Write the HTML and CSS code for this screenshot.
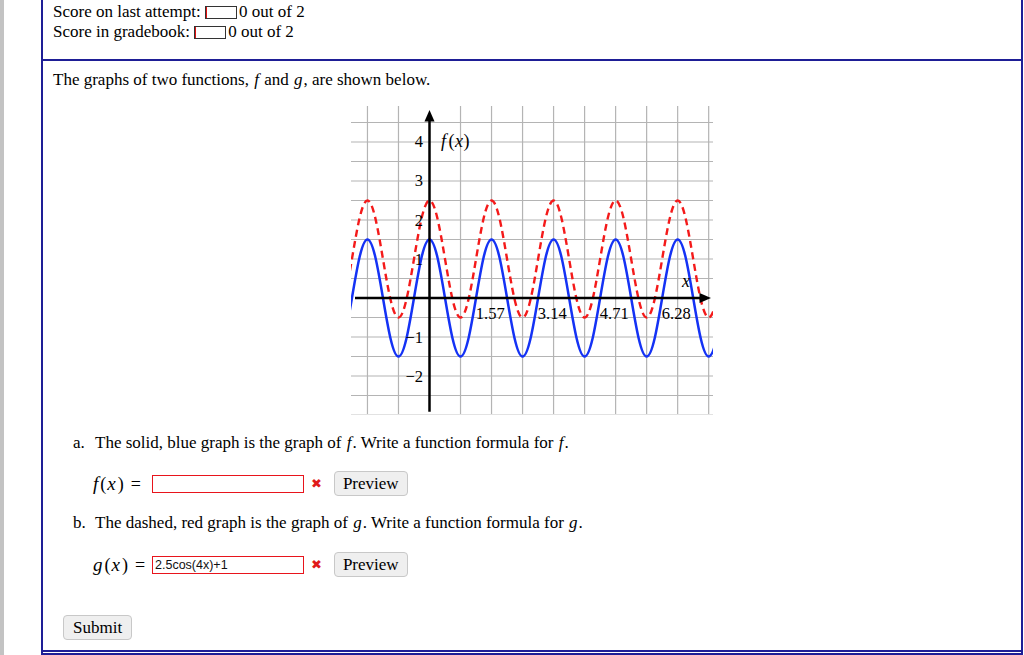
FILE: index.html
```html
<!DOCTYPE html>
<html>
<head>
<meta charset="utf-8">
<link rel="stylesheet" href="styles.css">
</head>
<body>
<div class="page">
  <div class="strip"></div>
  <div class="main">
    <div class="scores">
      <div class="score-line">Score on last attempt: <span class="bar"><span class="fill"></span></span><span class="val">0 out of 2</span></div>
      <div class="score-line">Score in gradebook: <span class="bar"><span class="fill"></span></span><span class="val">0 out of 2</span></div>
    </div>
    <div class="problem">
      <p class="intro">The graphs of two functions, <i class="mi">f</i> and <i class="mi">g</i>, are shown below.</p>
      <div class="graph-wrap">
        <svg class="graph" width="362" height="310" viewBox="0 0 362 310" xmlns="http://www.w3.org/2000/svg">
          <g class="grid" stroke="#b4b4b4" stroke-width="1.2">
            <line x1="16.46" y1="1" x2="16.46" y2="310"/>
            <line x1="47.48" y1="1" x2="47.48" y2="310"/>
            <line x1="109.52" y1="1" x2="109.52" y2="310"/>
            <line x1="140.54" y1="1" x2="140.54" y2="310"/>
            <line x1="171.56" y1="1" x2="171.56" y2="310"/>
            <line x1="202.58" y1="1" x2="202.58" y2="310"/>
            <line x1="233.6" y1="1" x2="233.6" y2="310"/>
            <line x1="264.62" y1="1" x2="264.62" y2="310"/>
            <line x1="295.64" y1="1" x2="295.64" y2="310"/>
            <line x1="326.66" y1="1" x2="326.66" y2="310"/>
            <line x1="357.68" y1="1" x2="357.68" y2="310"/>
            <line x1="0" y1="17.5" x2="362" y2="17.5"/>
            <line x1="0" y1="37" x2="362" y2="37"/>
            <line x1="0" y1="56.5" x2="362" y2="56.5"/>
            <line x1="0" y1="76" x2="362" y2="76"/>
            <line x1="0" y1="95.5" x2="362" y2="95.5"/>
            <line x1="0" y1="115" x2="362" y2="115"/>
            <line x1="0" y1="134.5" x2="362" y2="134.5"/>
            <line x1="0" y1="154" x2="362" y2="154"/>
            <line x1="0" y1="173.5" x2="362" y2="173.5"/>
            <line x1="0" y1="212.5" x2="362" y2="212.5"/>
            <line x1="0" y1="232" x2="362" y2="232"/>
            <line x1="0" y1="251.5" x2="362" y2="251.5"/>
            <line x1="0" y1="271" x2="362" y2="271"/>
            <line x1="0" y1="290.5" x2="362" y2="290.5"/>
            <line x1="0" y1="309.5" x2="362" y2="309.5" stroke="#e2e2e2"/>
          </g>
          <path class="red" fill="none" stroke="#f41a1a" stroke-width="2.4" stroke-dasharray="7,4.5"
            d="M-45.596,95.5
            c5.614,0 10.453,28.53 15.512,58.5 c5.059,29.97 9.898,58.5 15.512,58.5 c5.614,0 10.453,-28.53 15.512,-58.5 c5.059,-29.97 9.898,-58.5 15.512,-58.5
            c5.614,0 10.453,28.53 15.512,58.5 c5.059,29.97 9.898,58.5 15.512,58.5 c5.614,0 10.453,-28.53 15.512,-58.5 c5.059,-29.97 9.898,-58.5 15.512,-58.5
            c5.614,0 10.453,28.53 15.512,58.5 c5.059,29.97 9.898,58.5 15.512,58.5 c5.614,0 10.453,-28.53 15.512,-58.5 c5.059,-29.97 9.898,-58.5 15.512,-58.5
            c5.614,0 10.453,28.53 15.512,58.5 c5.059,29.97 9.898,58.5 15.512,58.5 c5.614,0 10.453,-28.53 15.512,-58.5 c5.059,-29.97 9.898,-58.5 15.512,-58.5
            c5.614,0 10.453,28.53 15.512,58.5 c5.059,29.97 9.898,58.5 15.512,58.5 c5.614,0 10.453,-28.53 15.512,-58.5 c5.059,-29.97 9.898,-58.5 15.512,-58.5
            c5.614,0 10.453,28.53 15.512,58.5 c5.059,29.97 9.898,58.5 15.512,58.5 c5.614,0 10.453,-28.53 15.512,-58.5 c5.059,-29.97 9.898,-58.5 15.512,-58.5
            c5.614,0 10.453,28.53 15.512,58.5 c5.059,29.97 9.898,58.5 15.512,58.5 c5.614,0 10.453,-28.53 15.512,-58.5 c5.059,-29.97 9.898,-58.5 15.512,-58.5"/>
          <path class="blue" fill="none" stroke="#1432f5" stroke-width="2.5"
            d="M-45.596,134.5
            c5.614,0 10.453,28.53 15.512,58.5 c5.059,29.97 9.898,58.5 15.512,58.5 c5.614,0 10.453,-28.53 15.512,-58.5 c5.059,-29.97 9.898,-58.5 15.512,-58.5
            c5.614,0 10.453,28.53 15.512,58.5 c5.059,29.97 9.898,58.5 15.512,58.5 c5.614,0 10.453,-28.53 15.512,-58.5 c5.059,-29.97 9.898,-58.5 15.512,-58.5
            c5.614,0 10.453,28.53 15.512,58.5 c5.059,29.97 9.898,58.5 15.512,58.5 c5.614,0 10.453,-28.53 15.512,-58.5 c5.059,-29.97 9.898,-58.5 15.512,-58.5
            c5.614,0 10.453,28.53 15.512,58.5 c5.059,29.97 9.898,58.5 15.512,58.5 c5.614,0 10.453,-28.53 15.512,-58.5 c5.059,-29.97 9.898,-58.5 15.512,-58.5
            c5.614,0 10.453,28.53 15.512,58.5 c5.059,29.97 9.898,58.5 15.512,58.5 c5.614,0 10.453,-28.53 15.512,-58.5 c5.059,-29.97 9.898,-58.5 15.512,-58.5
            c5.614,0 10.453,28.53 15.512,58.5 c5.059,29.97 9.898,58.5 15.512,58.5 c5.614,0 10.453,-28.53 15.512,-58.5 c5.059,-29.97 9.898,-58.5 15.512,-58.5
            c5.614,0 10.453,28.53 15.512,58.5 c5.059,29.97 9.898,58.5 15.512,58.5 c5.614,0 10.453,-28.53 15.512,-58.5 c5.059,-29.97 9.898,-58.5 15.512,-58.5"/>
          <g class="axes">
            <line x1="78.5" y1="15" x2="78.5" y2="306.7" stroke="#000" stroke-width="2.5"/>
            <polygon points="78.5,5 73.5,16.5 83.5,16.5" fill="#000"/>
            <line x1="4" y1="193" x2="350" y2="193" stroke="#000" stroke-width="2.5"/>
            <polygon points="360,193 348.5,188 348.5,198" fill="#000"/>
          </g>
          <g class="labels" font-family="Liberation Serif, Times New Roman, serif" font-size="16.5" fill="#000">
            <text x="72" y="42.2" text-anchor="end">4</text>
            <text x="72" y="81.2" text-anchor="end">3</text>
            <text x="72" y="120.5" text-anchor="end">2</text>
            <text x="72" y="159.5" text-anchor="end">1</text>
            <text x="72" y="238" text-anchor="end">−1</text>
            <text x="72" y="277" text-anchor="end">−2</text>
            <text x="139.3" y="213.6" text-anchor="middle">1.57</text>
            <text x="201.3" y="213.6" text-anchor="middle">3.14</text>
            <text x="263.3" y="213.6" text-anchor="middle">4.71</text>
            <text x="325.3" y="213.6" text-anchor="middle">6.28</text>
            <text x="90" y="42" font-size="18"><tspan font-style="italic">f</tspan><tspan dx="2.5">(</tspan><tspan font-style="italic" dx="0.5">x</tspan><tspan dx="0.5">)</tspan></text>
            <text x="331" y="182" font-style="italic" font-size="18">x</text>
          </g>
        </svg>
      </div>
      <div class="part"><span class="marker">a.</span><span>The solid, blue graph is the graph of <i class="mi">f</i>. Write a function formula for <i class="mi">f</i>.</span></div>
      <div class="answer">
        <span class="math"><i class="mi">f</i><span class="paren">(</span><i class="mi">x</i><span class="paren">)</span><span class="eq">=</span></span>
        <input class="ans-input" type="text" value="">
        <span class="bad">✖</span>
        <button class="btn">Preview</button>
      </div>
      <div class="part part-b"><span class="marker">b.</span><span>The dashed, red graph is the graph of <i class="mi">g</i>. Write a function formula for <i class="mi">g</i>.</span></div>
      <div class="answer answer-b">
        <span class="math"><i class="mi">g</i><span class="paren">(</span><i class="mi">x</i><span class="paren">)</span><span class="eq">=</span></span>
        <input class="ans-input" type="text" value="2.5cos(4x)+1">
        <span class="bad">✖</span>
        <button class="btn">Preview</button>
      </div>
      <div class="submit-row"><button class="btn submit">Submit</button></div>
    </div>
    <div class="tail"></div>
  </div>
</div>
</body>
</html>
```

FILE: styles.css
```css
html, body {
  margin: 0;
  padding: 0;
  background: #fff;
}
body {
  font-family: "Liberation Serif", "Times New Roman", serif;
  font-size: 17px;
  color: #000;
}
.page {
  display: flex;
  height: 655px;
  overflow: hidden;
}
.strip {
  flex: none;
  width: 4px;
  background: #c3c3c3;
}
.main {
  flex: none;
  margin-left: 37px;
  width: 978px;
  border-left: 2px solid #1e1e96;
  border-right: 2px solid #1e1e96;
}
.scores {
  padding: 2px 10px 17px;
  line-height: 20px;
  border-bottom: 2px solid #1e1e96;
}
.score-line {
  white-space: nowrap;
}
.bar {
  display: inline-block;
  box-sizing: border-box;
  width: 32px;
  height: 13px;
  border: 1px solid #333;
  vertical-align: -2px;
  position: relative;
}
.fill {
  position: absolute;
  left: 0;
  top: 0;
  bottom: 0;
  width: 1px;
  background: #e01010;
}
.val {
  margin-left: 2px;
}
.problem {
  padding: 9px 10px 10px;
  border-bottom: 2px solid #1e1e96;
}
.intro {
  margin: 0;
  line-height: 20px;
}
.mi {
  font-style: italic;
  margin: 0 1px;
}
.graph-wrap {
  margin-top: 15px;
  display: flex;
  justify-content: center;
  height: 310px;
}
.graph {
  display: block;
}
.part {
  display: flex;
  margin-top: 18px;
  padding-left: 20px;
  line-height: 20px;
}
.part-b {
  margin-top: 17px;
}
.marker {
  width: 22px;
  flex: none;
}
.answer {
  display: flex;
  align-items: center;
  height: 25px;
  margin-top: 18px;
  padding-left: 40px;
}
.answer-b {
  margin-top: 19px;
}
.math {
  display: flex;
  align-items: baseline;
  font-size: 18px;
  width: 59px;
  flex: none;
}
.math .mi {
  font-size: 19px;
  margin: 0;
}
.math .mi + .paren {
  margin-left: 2px;
}
.math .paren + .mi {
  margin-left: 1px;
}
.eq {
  margin-left: 7px;
}
.ans-input {
  box-sizing: border-box;
  width: 152px;
  height: 18px;
  margin: 0;
  padding: 0 2px;
  border: 1px solid #e8141c;
  outline: none;
  background: #fff;
  font-family: "Liberation Sans", Arial, sans-serif;
  font-size: 12.5px;
  color: #111;
}
.bad {
  margin-left: 7px;
  font-family: "DejaVu Sans", sans-serif;
  font-size: 13px;
  line-height: 1;
  color: #e01a1a;
}
.btn {
  box-sizing: border-box;
  height: 25px;
  margin: 0 0 0 12px;
  padding: 0 8px;
  border: 1px solid #c8c8c8;
  border-radius: 4px;
  background: #efefef;
  font-family: "Liberation Serif", "Times New Roman", serif;
  font-size: 17px;
  color: #000;
}
.submit-row {
  margin-top: 38px;
  padding-left: 10px;
  height: 25px;
  display: flex;
}
.submit {
  margin-left: 0;
  padding: 0 9px;
}
.tail {
  margin-top: 1px;
  border-top: 2px solid #1e1e96;
}
```
